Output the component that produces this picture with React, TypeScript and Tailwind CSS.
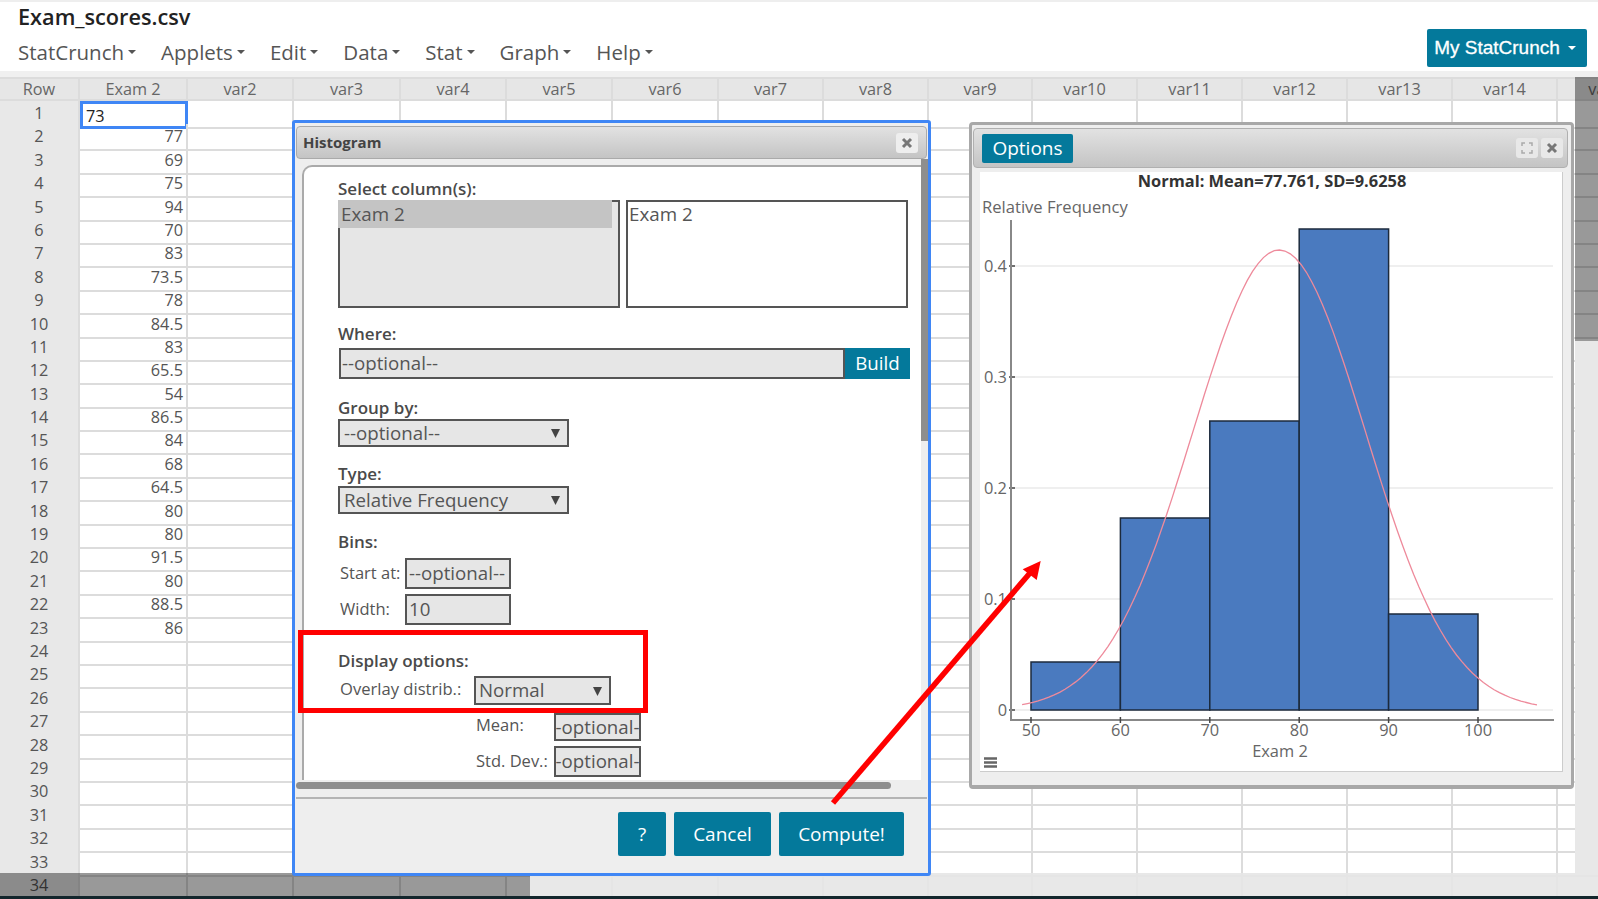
import React from 'react';

const columns = ['Exam 2', 'var2', 'var3', 'var4', 'var5', 'var6', 'var7', 'var8', 'var9', 'var10', 'var11', 'var12', 'var13', 'var14', 'var15'];
const values = ['73', '77', '69', '75', '94', '70', '83', '73.5', '78', '84.5', '83', '65.5', '54', '86.5', '84', '68', '64.5', '80', '80', '91.5', '80', '88.5', '86'];
const menus = ['StatCrunch', 'Applets', 'Edit', 'Data', 'Stat', 'Graph', 'Help'];
const rowCount = 34;

const gridCols = 'grid grid-cols-[80px_108px_106px_107px_106px_106px_106px_105px_105px_104px_105px_105px_105px_105px_105px_105px]';

// Histogram geometry, in page pixels
const xOf = (v: number) => 1031 + (v - 50) * 8.94;
const yOf = (f: number) => 710 - f * 1110;
const bars = [
  { from: 50, top: 662 },
  { from: 60, top: 518 },
  { from: 70, top: 421 },
  { from: 80, top: 229 },
  { from: 90, top: 614 },
];

const curvePath = () => {
  const mean = 77.761;
  const sd = 9.6258;
  const pts: string[] = [];
  for (let v = 49; v <= 106.8; v += 0.6) {
    const d = (10 * Math.exp(-((v - mean) ** 2) / (2 * sd * sd))) / (sd * Math.sqrt(2 * Math.PI));
    pts.push(`${xOf(v).toFixed(1)},${yOf(d).toFixed(1)}`);
  }
  return 'M' + pts.join('L');
};

const Caret = ({ color = 'border-t-[#555]' }: { color?: string }) => (
  <span className={`inline-block w-0 h-0 border-x-[4px] border-x-transparent border-t-[4px] ${color}`} />
);

const Arrow = () => (
  <svg width="11" height="10" viewBox="0 0 11 10" className="shrink-0">
    <polygon points="1,1 10,1 5.5,10" fill="#444" />
  </svg>
);

const Label = ({ children, className = '' }: { children: React.ReactNode; className?: string }) => (
  <div className={`h-[20px] leading-[18px] text-[17px] font-semibold text-[#4a4a4a] whitespace-nowrap ${className}`}>{children}</div>
);

const Field = ({ children, className = '' }: { children: React.ReactNode; className?: string }) => (
  <div className={`flex items-center border-2 border-[#555] bg-[#e6e6e6] text-[18.7px] text-[#555] whitespace-nowrap overflow-hidden ${className}`}>
    {children}
  </div>
);

const Close = ({ className = '' }: { className?: string }) => (
  <svg width="12" height="12" viewBox="0 0 12 12" className={className}>
    <path d="M2 2L10 10M10 2L2 10" stroke="#777" strokeWidth="3" />
  </svg>
);

const Sheet = () => (
  <div>
    <div className={`${gridCols} h-[24px] bg-[#e6e6e6] text-[#666] text-[16.3px] leading-[20px] text-center`}>
      <div className="border-r-2 border-b-2 border-t-2 border-[#dcdcdc]">Row</div>
      {columns.map((c) => (
        <div key={c} className="border-r-2 border-b-2 border-t-2 border-[#dcdcdc] whitespace-nowrap">{c}</div>
      ))}
    </div>
    {Array.from({ length: rowCount }, (_, i) => (
      <div key={i} className={`${gridCols} h-[23.4px] text-[16.3px] leading-[25px] text-[#555]`}>
        <div className="bg-[#e8e8e8] border-r-2 border-b-2 border-[#dcdcdc] text-center">{i + 1}</div>
        {columns.map((c, j) =>
          i === 0 && j === 0 ? (
            <div key={c} className="border-[3px] border-[#3f86f5] pl-[3px] pt-[2px] text-[#222] leading-[20px]">{values[0]}</div>
          ) : (
            <div key={c} className="border-r-2 border-b-2 border-[#dcdcdc] text-right pr-[3px]">
              {j === 0 ? values[i] : ''}
            </div>
          ),
        )}
      </div>
    ))}
  </div>
);

const HistogramDialog = () => (
  <div className="absolute left-[292px] top-[120px] w-[639px] h-[756px] border-[3px] border-[#3f86f5] rounded-[3px] bg-[#eeeeee] flex flex-col">
    <div className="mx-[1px] mt-[3px] h-[33px] shrink-0 rounded-[4px] border border-[#aaa] bg-gradient-to-b from-[#e2e2e2] to-[#c4c4c4] flex items-center justify-between pl-[6px] pr-[8px]">
      <span className="text-[15px] font-bold text-[#444]">Histogram</span>
      <span className="w-[22px] h-[20px] rounded-[3px] bg-[#eeeeee] flex items-center justify-center">
        <Close />
      </span>
    </div>
    <div className="relative h-[638px] shrink-0">
      <div className="absolute right-0 top-0 w-[7px] h-[282px] bg-[#8e8e8e]" />
      <div className="ml-[7px] mt-[6px] w-[619px] h-[615px] bg-white border-l-2 border-t-2 border-[#aaa] rounded-tl-[10px] pl-[34px] overflow-hidden">
        <Label className="mt-[13px]">Select column(s):</Label>
        <div className="flex gap-[6px] h-[108px] text-[18.8px] text-[#555]">
          <div className="w-[282px] border-2 border-[#555] bg-[#e6e6e6]">
            <div className="-mt-[2px] -ml-[2px] h-[28px] w-[274px] bg-[#c4c4c4] pl-[3px] leading-[28px]">Exam 2</div>
          </div>
          <div className="w-[282px] border-2 border-[#555] pl-[1px] leading-[24px]">Exam 2</div>
        </div>
        <Label className="mt-[17px]">Where:</Label>
        <div className="flex mt-[3px] ml-[1px] h-[31px]">
          <Field className="w-[506px] pl-[1px]">--optional--</Field>
          <div className="w-[65px] bg-[#04799b] text-white text-[18.7px] flex items-center justify-center">Build</div>
        </div>
        <Label className="mt-[20px]">Group by:</Label>
        <Field className="w-[231px] h-[28px] pl-[4px] pr-[6px] justify-between">--optional--<Arrow /></Field>
        <Label className="mt-[18px] h-[21px]">Type:</Label>
        <Field className="w-[231px] h-[28px] pl-[4px] pr-[6px] justify-between">Relative Frequency<Arrow /></Field>
        <Label className="mt-[19px]">Bins:</Label>
        <div className="flex items-center mt-[5px] h-[31px]">
          <span className="w-[67px] pl-[2px] text-[16.5px] text-[#555] whitespace-nowrap">Start at:</span>
          <Field className="w-[106px] h-full pl-[2px]">--optional--</Field>
        </div>
        <div className="flex items-center mt-[5px] h-[31px]">
          <span className="w-[67px] pl-[2px] text-[16.5px] text-[#555]">Width:</span>
          <Field className="w-[106px] h-full pl-[2px]">10</Field>
        </div>
        <Label className="mt-[27px]">Display options:</Label>
        <div className="flex items-center mt-[4px] h-[29px]">
          <span className="w-[136px] pl-[2px] mb-[3px] text-[16.6px] text-[#555] whitespace-nowrap">Overlay distrib.:</span>
          <Field className="w-[137px] h-full pl-[3px] pr-[6px] justify-between">Normal<Arrow /></Field>
        </div>
        <div className="flex items-center mt-[8px] h-[28px] pl-[138px]">
          <span className="w-[78px] mb-[3px] text-[16.5px] text-[#555]">Mean:</span>
          <Field className="w-[87px] h-full justify-center">-optional-</Field>
        </div>
        <div className="flex items-center mt-[5px] h-[31px] pl-[138px]">
          <span className="w-[78px] mb-[1px] text-[16.5px] text-[#555] whitespace-nowrap">Std. Dev.:</span>
          <Field className="w-[87px] h-full justify-center">-optional-</Field>
        </div>
      </div>
      <div className="ml-[1px] mt-[2px] w-[595px] h-[7px] rounded-full bg-[#8e8e8e]" />
    </div>
    <div className="mx-[1px] h-[2px] shrink-0 bg-[#b4b4b4]" />
    <div className="flex justify-end gap-[8px] pr-[24px] mt-[13px] text-[19px] text-white">
      <div className="w-[48px] h-[44px] bg-[#04799b] rounded-[2px] flex items-center justify-center">?</div>
      <div className="w-[97px] h-[44px] bg-[#04799b] rounded-[2px] flex items-center justify-center">Cancel</div>
      <div className="w-[125px] h-[44px] bg-[#04799b] rounded-[2px] flex items-center justify-center">Compute!</div>
    </div>
  </div>
);

const Chart = () => (
  <svg width="583" height="600" viewBox="980 172 583 600" className="block font-['Open_Sans',sans-serif]">
    <text x="1272" y="187" textAnchor="middle" fontSize="16.4" fontWeight="700" fill="#333">Normal: Mean=77.761, SD=9.6258</text>
    <text x="982" y="213" fontSize="16.6" fill="#666">Relative Frequency</text>
    {[0, 0.1, 0.2, 0.3, 0.4].map((t) => (
      <g key={t}>
        <line x1="1011" x2="1553" y1={yOf(t)} y2={yOf(t)} stroke="#eaeaea" strokeWidth="1.5" />
        <line x1="1009" x2="1015" y1={yOf(t)} y2={yOf(t)} stroke="#444" strokeWidth="1.5" />
        <text x="1007" y={yOf(t) + 6} textAnchor="end" fontSize="16.4" fill="#666">{t}</text>
      </g>
    ))}
    {bars.map((b) => (
      <rect key={b.from} x={xOf(b.from)} y={b.top} width={xOf(b.from + 10) - xOf(b.from)} height={710 - b.top} fill="#4a7abf" stroke="#1c2a3c" strokeWidth="1.5" />
    ))}
    <path d={curvePath()} fill="none" stroke="#ee8a9b" strokeWidth="1.3" />
    <line x1="1011" x2="1011" y1="220" y2="721" stroke="#888" strokeWidth="2" />
    <line x1="1010" x2="1554" y1="720" y2="720" stroke="#888" strokeWidth="2" />
    {[50, 60, 70, 80, 90, 100].map((t) => (
      <g key={t}>
        <line x1={xOf(t)} x2={xOf(t)} y1="717" y2="723" stroke="#444" strokeWidth="1.5" />
        <text x={xOf(t)} y="736" textAnchor="middle" fontSize="16.4" fill="#666">{t}</text>
      </g>
    ))}
    <text x="1280" y="757" textAnchor="middle" fontSize="16.4" fill="#666">Exam 2</text>
    <path d="M984 758.5H997M984 762.5H997M984 766.5H997" stroke="#666" strokeWidth="2.5" />
  </svg>
);

const OptionsWindow = () => (
  <div className="absolute left-[969px] top-[122px] w-[605px] h-[667px] border-[3px] border-b-[4px] border-[#a8a8a8] rounded-[4px] bg-[#eeeeee] flex flex-col">
    <div className="ml-[1px] mr-[3px] mt-[3px] h-[40px] shrink-0 rounded-[4px] border border-[#b0b0b0] bg-gradient-to-b from-[#e2e2e2] to-[#c4c4c4] flex items-center justify-between pl-[8px] pr-[4px]">
      <div className="w-[91px] h-[29px] bg-[#04799b] rounded-[2px] text-white text-[19px] flex items-center justify-center">Options</div>
      <div className="flex gap-[3px]">
        <span className="w-[22px] h-[20px] rounded-[3px] bg-[#e8e8e8] flex items-center justify-center">
          <svg width="12" height="12" viewBox="0 0 12 12">
            <path d="M1 4V1H4M8 1H11V4M11 8V11H8M4 11H1V8" fill="none" stroke="#aaa" strokeWidth="1.5" />
          </svg>
        </span>
        <span className="w-[22px] h-[20px] rounded-[3px] bg-[#e8e8e8] flex items-center justify-center">
          <Close />
        </span>
      </div>
    </div>
    <div className="ml-[8px] mt-[4px] w-[583px] h-[600px] bg-white border-r border-b border-[#ccc]">
      <Chart />
    </div>
  </div>
);

export default function App() {
  const curveArrow = (
    <svg width="1598" height="899" className="absolute left-0 top-0 pointer-events-none">
      <line x1="833" y1="803" x2="1030" y2="573" stroke="#ff0000" strokeWidth="5.5" />
      <polygon points="1040.7,561 1022.7,569.3 1036.7,580" fill="#ff0000" />
    </svg>
  );

  return (
    <div className="relative w-[1598px] h-[899px] overflow-hidden bg-white font-['Open_Sans',sans-serif]">
      <div className="h-[2px] bg-[#eeeeee]" />
      <header className="h-[68.5px] flex justify-between pl-[18px] pr-[11px]">
        <div>
          <div className="mt-[2px] h-[26px] leading-[26px] text-[21.7px] font-semibold text-[#222]">Exam_scores.csv</div>
          <nav className="flex gap-[25px] mt-[9px] h-[26px] text-[20.5px] leading-[26px] text-[#555]">
            {menus.map((m) => (
              <span key={m} className="flex items-center gap-[4px]">{m}<Caret /></span>
            ))}
          </nav>
        </div>
        <button className="mt-[27px] w-[160px] h-[38px] pr-[4px] bg-[#04799b] rounded-[2px] text-white text-[19px] font-['Liberation_Sans',sans-serif] [-webkit-text-stroke:0.3px_white] flex items-center justify-center gap-[8px]">
          My StatCrunch<Caret color="border-t-white" />
        </button>
      </header>
      <div className="h-[6.5px] bg-[#f0f0f0]" />
      <Sheet />

      {/* scrollbars sit over the sheet */}
      <div className="absolute left-[1575px] top-[77px] w-[23px] h-[264px] bg-black/40" />
      <div className="absolute left-[1575px] top-[341px] w-[23px] h-[532px] bg-[#e8e8e8]" />
      <div className="absolute left-0 top-[873px] w-[530px] h-[23px] bg-black/40" />
      <div className="absolute left-[530px] top-[873px] w-[1068px] h-[23px] bg-[#e6e6e6]/90" />
      <div className="absolute left-0 top-[896px] w-[1598px] h-[3px] bg-[#13262c]" />

      <HistogramDialog />
      <OptionsWindow />

      <div className="absolute left-[298px] top-[630px] w-[350px] h-[83px] border-[5px] border-[#ff0000]" />
      {curveArrow}
    </div>
  );
}
